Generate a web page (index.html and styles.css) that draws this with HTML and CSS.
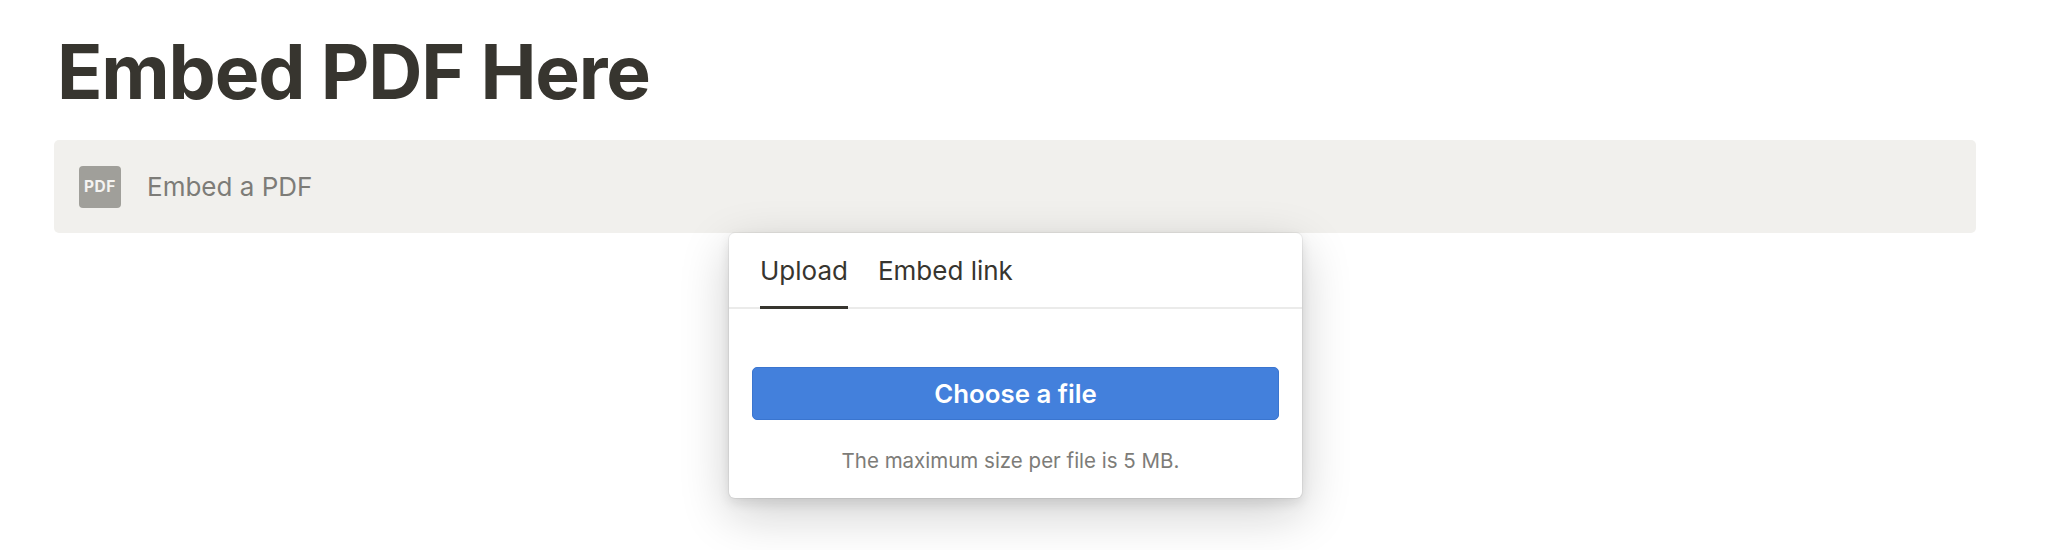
FILE: index.html
```html
<!DOCTYPE html>
<html lang="en">
<head>
<meta charset="utf-8">
<title>Embed PDF Here</title>
<link rel="stylesheet" href="styles.css">
</head>
<body>
<main class="page">
  <h1 class="title">Embed PDF Here</h1>
  <div class="embed">
    <div class="pdf-icon"><span>PDF</span></div>
    <span class="embed-label">Embed a PDF</span>
    <section class="popup">
      <div class="tabs">
        <div class="tab active">Upload</div>
        <div class="tab">Embed link</div>
      </div>
      <div class="panel">
        <button class="choose" type="button">Choose a file</button>
        <p class="note">The maximum size per file is 5 MB.</p>
      </div>
    </section>
  </div>
</main>
</body>
</html>
```
FILE: styles.css
```css
* { box-sizing: border-box; }
html, body { margin: 0; height: 100%; background: #fff; overflow: hidden; }
body { font-family: Inter, "Liberation Sans", sans-serif; color: #37352f; }
.page { padding: 28px 72px 0 54px; }
.title {
  margin: 0 0 24px 3px;
  font-size: 75px;
  line-height: 88px;
  font-weight: 700;
  letter-spacing: -1.2px;
  color: #37352f;
}
.embed {
  position: relative;
  display: flex;
  align-items: center;
  gap: 26px;
  height: 93px;
  padding-left: 25px;
  background: #f1f0ed;
  border-radius: 5px;
}
.pdf-icon {
  width: 42px;
  height: 42px;
  border-radius: 4px;
  background: #a09f9a;
  display: flex;
  align-items: center;
  justify-content: center;
  color: #f4f3f1;
  font-size: 15.5px;
  font-weight: 700;
  letter-spacing: 0.6px;
}
.embed-label { font-size: 26px; color: #7d7c78; }
.popup {
  position: absolute;
  top: 93px;
  left: 675px;
  width: 573px;
  height: 265px;
  background: #fff;
  border-radius: 6px;
  box-shadow: 0 0 0 1px rgba(15,15,15,.05), 0 5px 12px rgba(15,15,15,.1), 0 16px 50px rgba(15,15,15,.2);
}
.tabs {
  display: flex;
  gap: 30px;
  height: 76px;
  padding-left: 31px;
  border-bottom: 2px solid #ebebea;
}
.tab {
  height: 76px;
  line-height: 38px;
  padding-top: 19px;
  font-size: 26px;
  color: #37352f;
}
.tab.active { border-bottom: 3px solid #37352f; }
.panel { padding: 58px 23px 0; }
.choose {
  display: block;
  width: 100%;
  height: 53px;
  border: 1px solid #3a75cf;
  border-radius: 5px;
  background: #4380dc;
  color: #fff;
  font: 600 25.8px Inter, "Liberation Sans", sans-serif;
}
.note {
  margin: 26px 0 0;
  padding-right: 10px;
  text-align: center;
  font-size: 20.5px;
  line-height: 30px;
  color: #7d7c78;
}
```
